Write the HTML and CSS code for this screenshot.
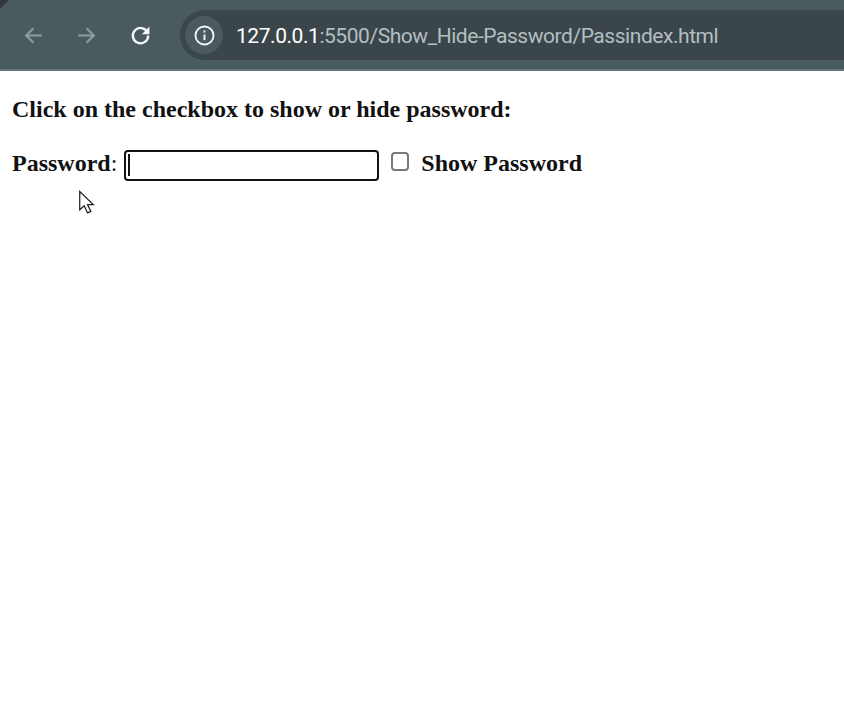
FILE: index.html
```html
<!DOCTYPE html>
<html lang="en">
<head>
<meta charset="utf-8">
<title>Show / Hide Password</title>
<link rel="stylesheet" href="styles.css">
</head>
<body>
<header class="toolbar">
  <svg class="tab-corner" viewBox="0 0 12 12"><path d="M0 0h12L0 12z"/></svg>
  <div class="nav">
    <svg class="icon dim" viewBox="0 0 20 20"><path d="M18 10H3M10 3l-7 7 7 7"/></svg>
    <svg class="icon dim" viewBox="0 0 20 20"><path d="M2 10h15M10 3l7 7-7 7"/></svg>
    <svg class="icon bright" viewBox="0 0 20 20"><path d="M16.600 7A7.300 7.300 0 1 0 17.300 10"/><path class="solid" d="M18.500 1.500v7.200h-7.200z"/></svg>
  </div>
  <div class="omnibox">
    <div class="info">
      <svg viewBox="0 0 20 20"><circle cx="10" cy="10" r="8.600"/><path d="M10 9v5.400"/><path d="M10 5.200v2"/></svg>
    </div>
    <div class="url"><span class="host">127.0.0.1</span>:5500/Show_Hide-Password/Passindex.html</div>
  </div>
</header>
<main class="page">
  <p class="lead">Click on the checkbox to show or hide password:</p>
  <div class="form-row">
    <label class="pw-label" for="pw"><b>Password</b>:</label>
    <span class="field" id="pw"><span class="caret"></span></span>
    <span class="check"></span>
    <b class="show">Show Password</b>
  </div>
  <svg class="cursor" viewBox="0 0 16 24"><path d="M1.500 1.500V19l4.300-3.800L9 22l3.200-1.500-3.200-6.500h5.500z"/></svg>
</main>
</body>
</html>
```
FILE: styles.css
```css
* { box-sizing: border-box; }
html, body { margin: 0; height: 100%; background: #fff; overflow: hidden; }
.toolbar {
  position: relative;
  height: 71px;
  display: flex;
  align-items: center;
  background: #4a5b5f;
  border-bottom: 2px solid #65777a;
  padding-left: 23px;
}
.tab-corner { position: absolute; left: 0; top: 0; width: 9px; height: 9px; fill: #2f393c; }
.nav { display: flex; align-items: center; gap: 32px; margin-right: 29px; padding-top: 1px; }
.icon { width: 21px; height: 21px; fill: none; stroke-width: 2; }
.icon.dim { stroke: #8e9c9f; }
.icon.bright { margin-left: 1px; stroke: #f6f8f8; stroke-width: 2.200; }
.icon .solid { fill: #f6f8f8; stroke: none; }
.omnibox {
  flex: 1;
  height: 50px;
  margin-top: 1px;
  display: flex;
  align-items: center;
  background: #3a464a;
  border-radius: 25px 0 0 25px;
  padding-left: 5px;
}
.info {
  width: 38px;
  height: 38px;
  border-radius: 50%;
  background: #4b5a5e;
  display: flex;
  align-items: center;
  justify-content: center;
}
.info svg { width: 21px; height: 21px; fill: none; stroke: #f2f5f5; stroke-width: 1.800; }
.url {
  margin-left: 13px;
  padding-top: 2px;
  font: 21px/1 Roboto, sans-serif;
  letter-spacing: -0.45px;
  color: #b4bfc2;
  white-space: nowrap;
}
.host { color: #fff; }
.page {
  position: relative;
  padding: 25px 12px 0;
  font-family: "Liberation Serif", serif;
  font-size: 24px;
  color: #111;
}
.lead { margin: 0 0 26px; font-weight: 700; line-height: 27px; }
.form-row { display: flex; align-items: center; height: 32px; }
.pw-label { margin: 0 7px 4px 0; }
.field {
  width: 255px;
  height: 31px;
  border: 2.500px solid #111;
  border-radius: 4px;
  display: flex;
  align-items: center;
  padding-left: 2px;
}
.caret { width: 2px; height: 22px; background: #111; }
.check {
  width: 18px;
  height: 19px;
  margin: -7px 0 0 12px;
  border: 2px solid #777;
  border-radius: 4px;
  background: #fff;
}
.show { margin: 0 0 4px 12px; }
.cursor {
  position: absolute;
  left: 78px;
  top: 119px;
  width: 17px;
  height: 25px;
  fill: #fff;
  stroke: #222;
  stroke-width: 1.200;
}
```
